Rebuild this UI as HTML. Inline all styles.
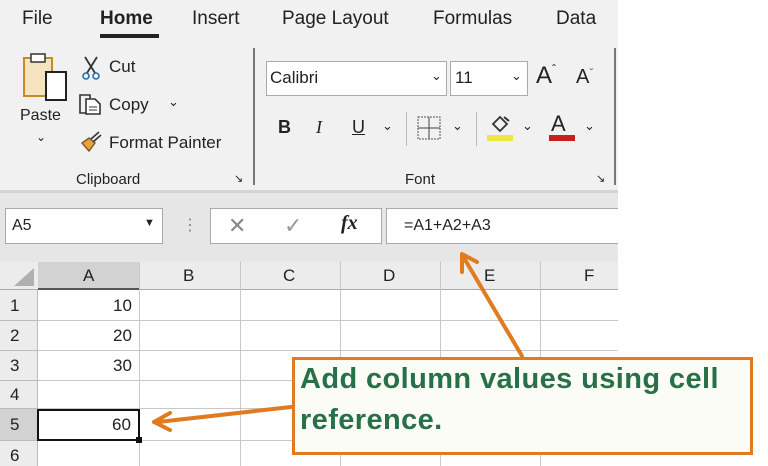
<!DOCTYPE html>
<html><head><meta charset="utf-8"><style>
*{margin:0;padding:0;box-sizing:border-box}
body{width:768px;height:466px;overflow:hidden;background:#fff;position:relative;font-family:"Liberation Sans",sans-serif;color:#222}
.a{position:absolute}
.t{position:absolute;white-space:nowrap}
</style></head><body>
<div class="a" style="left:0;top:0;width:618px;height:192px;background:#f1f1f1"></div>
<div class="a" style="left:0;top:192px;width:618px;height:70px;background:#e6e6e6"></div>
<div class="a" style="left:0;top:190px;width:618px;height:3px;background:#d4d4d4"></div>
<!-- tabs -->
<div class="t" style="left:22px;top:8px;font-size:19px">File</div>
<div class="t" style="left:100px;top:8px;font-size:19px;font-weight:bold">Home</div>
<div class="a" style="left:100px;top:34px;width:59px;height:4px;background:#222"></div>
<div class="t" style="left:192px;top:8px;font-size:19px">Insert</div>
<div class="t" style="left:282px;top:8px;font-size:19px">Page Layout</div>
<div class="t" style="left:433px;top:8px;font-size:19px">Formulas</div>
<div class="t" style="left:556px;top:8px;font-size:19px">Data</div>
<!-- paste icon -->
<svg class="a" style="left:20px;top:50px" width="50" height="52"><rect x="4" y="8" width="28" height="38" fill="#f6e4c0" stroke="#c68a28" stroke-width="2"/><rect x="11" y="4" width="14" height="8" fill="#fff" stroke="#333" stroke-width="1.5"/><rect x="26" y="22" width="20" height="28" fill="#fff" stroke="#222" stroke-width="2"/></svg>
<div class="t" style="left:20px;top:107px;font-size:16px">Paste</div>
<div class="t" style="left:36px;top:130px;font-size:12px">⌄</div>
<svg class="a" style="left:80px;top:55px" width="22" height="26"><path d="M5 2L15 18M17 2L7 18" stroke="#333" stroke-width="1.8" fill="none"/><circle cx="6" cy="21" r="3" fill="none" stroke="#2a6ea8" stroke-width="1.6"/><circle cx="16" cy="21" r="3" fill="none" stroke="#2a6ea8" stroke-width="1.6"/></svg>
<div class="t" style="left:109px;top:57px;font-size:17px">Cut</div>
<svg class="a" style="left:78px;top:92px" width="28" height="24"><path d="M2 3H12V21H2Z" fill="none" stroke="#333" stroke-width="1.6"/><path d="M8 7H17L22 12V22H8Z" fill="#fff" stroke="#333" stroke-width="1.6"/><path d="M11 15H19M11 18H19" stroke="#333"/></svg>
<div class="t" style="left:109px;top:95px;font-size:17px">Copy</div>
<div class="t" style="left:168px;top:94px;font-size:13px">⌄</div>
<svg class="a" style="left:79px;top:129px" width="26" height="24"><path d="M3 14L10 22L16 14L10 9Z" fill="#e8a43a" stroke="#7a5a20" stroke-width="1.4"/><path d="M12 10L20 3M14 13L22 6" stroke="#333" stroke-width="1.6"/></svg>
<div class="t" style="left:109px;top:133px;font-size:17px">Format Painter</div>
<div class="t" style="left:76px;top:171px;font-size:15px">Clipboard</div>
<div class="t" style="left:234px;top:172px;font-size:11px">↘</div>
<div class="a" style="left:253px;top:48px;width:2px;height:137px;background:#777"></div>
<!-- font group -->
<div class="a" style="left:266px;top:61px;width:181px;height:35px;background:#fff;border:1px solid #aaa"></div>
<div class="t" style="left:270px;top:68px;font-size:17px">Calibri</div>
<div class="t" style="left:431px;top:68px;font-size:13px">⌄</div>
<div class="a" style="left:450px;top:61px;width:78px;height:35px;background:#fff;border:1px solid #aaa"></div>
<div class="t" style="left:455px;top:68px;font-size:17px">11</div>
<div class="t" style="left:511px;top:68px;font-size:13px">⌄</div>
<div class="t" style="left:536px;top:62px;font-size:24px">A<span style="font-size:12px;vertical-align:top">ˆ</span></div>
<div class="t" style="left:576px;top:66px;font-size:20px">A<span style="font-size:12px;vertical-align:top;color:#2a7a9a">ˇ</span></div>
<div class="t" style="left:278px;top:117px;font-size:18px;font-weight:bold">B</div>
<div class="t" style="left:316px;top:117px;font-size:18px;font-style:italic;font-family:'Liberation Serif',serif">I</div>
<div class="t" style="left:352px;top:117px;font-size:18px;text-decoration:underline">U</div>
<div class="t" style="left:382px;top:118px;font-size:13px">⌄</div>
<div class="a" style="left:406px;top:112px;width:1px;height:34px;background:#bbb"></div>
<svg class="a" style="left:417px;top:116px" width="26" height="24"><rect x="1" y="1" width="22" height="22" fill="none" stroke="#555" stroke-dasharray="2,1"/><path d="M12 1V23M1 12H23" stroke="#444"/></svg>
<div class="t" style="left:452px;top:118px;font-size:13px">⌄</div>
<div class="a" style="left:476px;top:112px;width:1px;height:34px;background:#bbb"></div>
<svg class="a" style="left:488px;top:112px" width="26" height="22"><path d="M5 12L12 5L19 12L12 19Z" fill="none" stroke="#333" stroke-width="1.8"/><path d="M16 5L21 9" stroke="#333" stroke-width="2"/></svg>
<div class="a" style="left:487px;top:135px;width:26px;height:6px;background:#f0e640"></div>
<div class="t" style="left:522px;top:118px;font-size:13px">⌄</div>
<div class="t" style="left:551px;top:111px;font-size:22px">A</div>
<div class="a" style="left:549px;top:135px;width:26px;height:6px;background:#c81f1f"></div>
<div class="t" style="left:584px;top:118px;font-size:13px">⌄</div>
<div class="t" style="left:405px;top:171px;font-size:15px">Font</div>
<div class="t" style="left:596px;top:172px;font-size:11px">↘</div>
<div class="a" style="left:614px;top:48px;width:2px;height:137px;background:#777"></div>
<!-- formula bar -->
<div class="a" style="left:5px;top:208px;width:158px;height:36px;background:#fff;border:1px solid #aaa"></div>
<div class="t" style="left:12px;top:217px;font-size:16px">A5</div>
<div class="t" style="left:144px;top:217px;font-size:11px">▼</div>
<div class="t" style="left:182px;top:215px;font-size:16px;color:#888">⋮</div>
<div class="a" style="left:210px;top:208px;width:172px;height:36px;background:#fff;border:1px solid #aaa"></div>
<div class="t" style="left:228px;top:213px;font-size:22px;color:#888">✕</div>
<div class="t" style="left:284px;top:213px;font-size:22px;color:#999">✓</div>
<div class="t" style="left:341px;top:212px;font-size:20px;font-style:italic;font-family:'Liberation Serif',serif;font-weight:bold">fx</div>
<div class="a" style="left:386px;top:208px;width:232px;height:36px;background:#fff;border:1px solid #aaa;border-right:none"></div>
<div class="t" style="left:404px;top:217px;font-size:16px">=A1+A2+A3</div>
<!-- grid -->
<div class="a" style="left:0;top:262px;width:618px;height:28px;background:#ececec;border-bottom:1px solid #aaa"></div>
<div class="a" style="left:0;top:290px;width:38px;height:176px;background:#ececec;border-right:1px solid #bbb"></div>
<div class="a" style="left:38px;top:262px;width:101px;height:28px;background:#d2d2d2;border-bottom:2px solid #555"></div>
<div class="a" style="left:0;top:408px;width:38px;height:32px;background:#d2d2d2"></div>
<svg class="a" style="left:12px;top:266px" width="24" height="22"><path d="M22 2V20H2Z" fill="#b0b0b0"/></svg>
<div class="t" style="left:83px;top:266px;font-size:17px">A</div>
<div class="t" style="left:183px;top:266px;font-size:17px">B</div>
<div class="t" style="left:283px;top:266px;font-size:17px">C</div>
<div class="t" style="left:383px;top:266px;font-size:17px">D</div>
<div class="t" style="left:484px;top:266px;font-size:17px">E</div>
<div class="t" style="left:584px;top:266px;font-size:17px">F</div>
<svg class="a" style="left:0;top:262px" width="618" height="204">
<g stroke="#c8c8c8" stroke-width="1">
<path d="M139.5 0V204M240.5 0V204M340.5 0V204M440.5 0V204M540.5 0V204"/>
<path d="M38 58.5H618M38 88.5H618M38 118.5H618M38 146.5H618M38 178.5H618"/>
<path d="M0 58.5H38M0 88.5H38M0 118.5H38M0 146.5H38M0 178.5H38" stroke="#bbb"/>
</g></svg>
<div class="t" style="left:10px;top:296px;font-size:17px">1</div>
<div class="t" style="left:10px;top:326px;font-size:17px">2</div>
<div class="t" style="left:10px;top:356px;font-size:17px">3</div>
<div class="t" style="left:10px;top:385px;font-size:17px">4</div>
<div class="t" style="left:10px;top:415px;font-size:17px">5</div>
<div class="t" style="left:10px;top:446px;font-size:17px">6</div>
<div class="t" style="left:113px;top:296px;font-size:17px">10</div>
<div class="t" style="left:113px;top:326px;font-size:17px">20</div>
<div class="t" style="left:113px;top:356px;font-size:17px">30</div>
<div class="a" style="left:37px;top:409px;width:103px;height:32px;border:2px solid #111"></div>
<div class="a" style="left:136px;top:437px;width:6px;height:6px;background:#111"></div>
<div class="t" style="left:112px;top:415px;font-size:17px">60</div>
<!-- callout -->
<div class="a" style="left:292px;top:357px;width:461px;height:98px;background:#fcfcf7;border:3px solid #e07b20"></div>
<div class="t" style="left:300px;top:363px;font-size:29px;letter-spacing:0.4px;font-weight:bold;color:#277048">Add column values using cell</div>
<div class="t" style="left:300px;top:404px;font-size:29px;letter-spacing:0.4px;font-weight:bold;color:#277048">reference.</div>
<svg class="a" style="left:0;top:0" width="768" height="466"><g stroke="#e07b20" stroke-width="4" fill="none" stroke-linecap="round"><path d="M522 356L464 258M462 254L462 272M462 254L477 262"/><path d="M291 407L158 422M154 422L170 413M154 422L170 430"/></g></svg>
</body></html>
